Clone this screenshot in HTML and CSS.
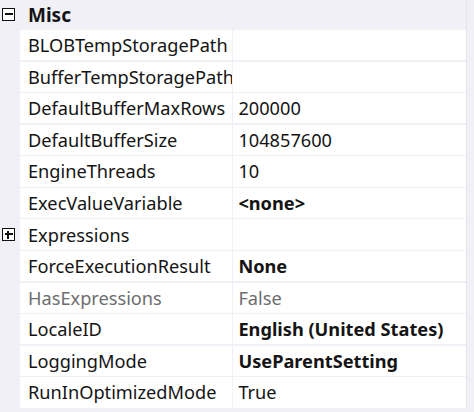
FILE: index.html
```html
<!DOCTYPE html>
<html>
<head>
<meta charset="utf-8">
<link rel="stylesheet" href="styles.css">
</head>
<body>
<div class="grid">
  <div class="header">
    <div class="gut"><span class="box minus"></span></div>
    <div class="cat">Misc</div>
  </div>
  <div class="row"><div class="gut"></div><div class="name">BLOBTempStoragePath</div><div class="val"></div></div>
  <div class="row"><div class="gut"></div><div class="name">BufferTempStoragePath</div><div class="val"></div></div>
  <div class="row"><div class="gut"></div><div class="name">DefaultBufferMaxRows</div><div class="val">200000</div></div>
  <div class="row"><div class="gut"></div><div class="name">DefaultBufferSize</div><div class="val">104857600</div></div>
  <div class="row"><div class="gut"></div><div class="name">EngineThreads</div><div class="val">10</div></div>
  <div class="row"><div class="gut"></div><div class="name">ExecValueVariable</div><div class="val bold">&lt;none&gt;</div></div>
  <div class="row"><div class="gut"><span class="box plus"></span></div><div class="name">Expressions</div><div class="val"></div></div>
  <div class="row"><div class="gut"></div><div class="name">ForceExecutionResult</div><div class="val bold">None</div></div>
  <div class="row dim"><div class="gut"></div><div class="name">HasExpressions</div><div class="val">False</div></div>
  <div class="row"><div class="gut"></div><div class="name">LocaleID</div><div class="val bold">English (United States)</div></div>
  <div class="row"><div class="gut"></div><div class="name">LoggingMode</div><div class="val bold">UseParentSetting</div></div>
  <div class="row"><div class="gut"></div><div class="name">RunInOptimizedMode</div><div class="val">True</div></div>
</div>
</body>
</html>
```
FILE: styles.css
```css
html, body {
  margin: 0;
  padding: 0;
  background: #f0f0f6;
}
body {
  width: 474px;
  height: 412px;
  overflow: hidden;
  font-family: "Noto Sans", "Open Sans", sans-serif;
  font-size: 18.2px;
  color: #141414;
}
.grid {
  width: 466px;
  display: flex;
  flex-direction: column;
  border-right: 1px solid #e4e4ec;
}
.header {
  display: flex;
  height: 29px;
  margin-bottom: 1px;
  align-items: center;
}
.header .cat {
  font-weight: bold;
  font-size: 19px;
  padding-left: 8px;
}
.gut {
  width: 20px;
  flex: none;
  display: flex;
  align-items: center;
  align-self: stretch;
}
.row {
  display: flex;
  height: 30.2px;
  margin-bottom: 1.4px;
}
.name {
  width: 204px;
  flex: none;
  background: #fff;
  padding-left: 8px;
  margin-right: 1.4px;
  white-space: nowrap;
  overflow: hidden;
  display: flex;
  align-items: center;
}
.val {
  flex: 1;
  background: #fff;
  padding-left: 5px;
  white-space: nowrap;
  overflow: hidden;
  display: flex;
  align-items: center;
}
.bold { font-weight: bold; }
.dim .name, .dim .val { color: #6d6d6d; }
.box {
  width: 13px;
  height: 13px;
  border: 1.5px solid #111;
  position: relative;
  box-sizing: border-box;
  background: #fff;
  margin-left: 2px;
}
.box::before {
  content: "";
  position: absolute;
  left: 1.5px;
  right: 1.5px;
  top: 4.25px;
  height: 1.5px;
  background: #111;
}
.plus::after {
  content: "";
  position: absolute;
  top: 1.5px;
  bottom: 1.5px;
  left: 4.25px;
  width: 1.5px;
  background: #111;
}
```
